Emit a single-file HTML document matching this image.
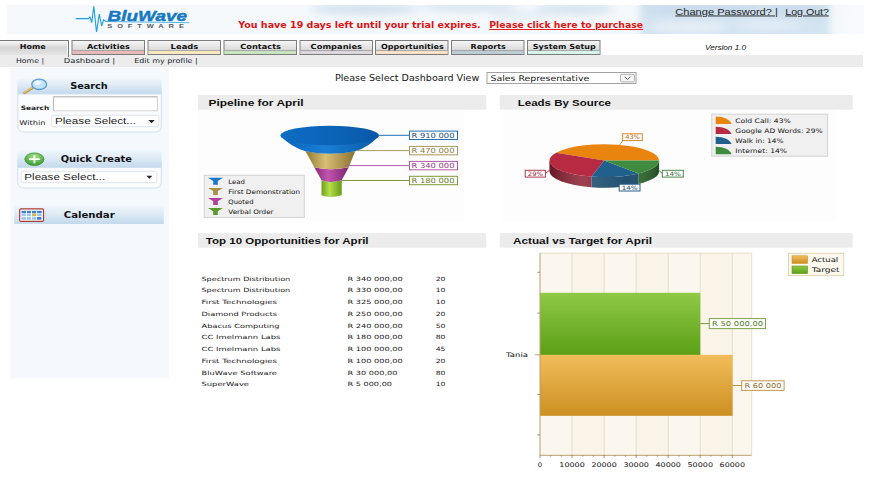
<!DOCTYPE html>
<html><head><meta charset="utf-8"><title>BluWave CRM Dashboard</title>
<style>
html,body{margin:0;padding:0;width:890px;height:500px;overflow:hidden;background:#fff}
svg{display:block}
text{white-space:pre}
</style></head><body>
<svg width="890" height="500" viewBox="0 0 890 500">
<defs>
<filter id="bl" x="-20%" y="-80%" width="140%" height="260%"><feGaussianBlur stdDeviation="4"/></filter>
<linearGradient id="hg" x1="0" x2="1"><stop offset="0" stop-color="#f4f8fc"/><stop offset="0.3" stop-color="#f3f7fb"/><stop offset="0.45" stop-color="#e3edf6"/><stop offset="0.8" stop-color="#d6e5f2"/><stop offset="0.95" stop-color="#e4eef7"/><stop offset="1" stop-color="#f6f9fc"/></linearGradient>
<clipPath id="hc"><rect x="7" y="5" width="857" height="29"/></clipPath>
<linearGradient id="tabg" x1="0" y1="0" x2="0" y2="1"><stop offset="0" stop-color="#f7f7f7"/><stop offset="0.5" stop-color="#e2e2e2"/><stop offset="1" stop-color="#cfcfcf"/></linearGradient>
<linearGradient id="homeg" x1="0" y1="0" x2="0" y2="1"><stop offset="0" stop-color="#fafafa"/><stop offset="0.45" stop-color="#d6d6d6"/><stop offset="0.75" stop-color="#dedede"/><stop offset="1" stop-color="#ececec"/></linearGradient>
<linearGradient id="phg" x1="0" y1="0" x2="0" y2="1"><stop offset="0" stop-color="#f0f6fb"/><stop offset="0.5" stop-color="#dce9f5"/><stop offset="1" stop-color="#c2d9ec"/></linearGradient>
<radialGradient id="gp" cx="0.5" cy="0.3" r="0.7"><stop offset="0" stop-color="#a5e08a"/><stop offset="1" stop-color="#3a9a32"/></radialGradient>
<linearGradient id="gbar" x1="0" y1="0" x2="0" y2="1"><stop offset="0" stop-color="#8fc945"/><stop offset="1" stop-color="#5c9f17"/></linearGradient>
<linearGradient id="obar" x1="0" y1="0" x2="0" y2="1"><stop offset="0" stop-color="#f2bd5a"/><stop offset="1" stop-color="#cc8f22"/></linearGradient>
<linearGradient id="fblue" x1="0" x2="1"><stop offset="0" stop-color="#0a63b8"/><stop offset="0.45" stop-color="#1a7fd6"/><stop offset="1" stop-color="#0a5aa8"/></linearGradient>
<linearGradient id="ftop" x1="0" x2="1"><stop offset="0" stop-color="#0d6cc4"/><stop offset="0.6" stop-color="#0b62b6"/><stop offset="1" stop-color="#0a58a6"/></linearGradient>
<linearGradient id="ftan" x1="0" x2="1"><stop offset="0" stop-color="#8f7836"/><stop offset="0.4" stop-color="#d9be74"/><stop offset="1" stop-color="#8a7232"/></linearGradient>
<linearGradient id="fpur" x1="0" x2="1"><stop offset="0" stop-color="#8a2a7c"/><stop offset="0.4" stop-color="#c055ae"/><stop offset="1" stop-color="#7c2470"/></linearGradient>
<linearGradient id="fgrn" x1="0" x2="1"><stop offset="0" stop-color="#6fa01c"/><stop offset="0.4" stop-color="#b4e04a"/><stop offset="1" stop-color="#6a981a"/></linearGradient>
<linearGradient id="pside" x1="0" x2="1"><stop offset="0" stop-color="#000" stop-opacity="0.25"/><stop offset="0.3" stop-color="#fff" stop-opacity="0.16"/><stop offset="0.7" stop-color="#fff" stop-opacity="0.05"/><stop offset="1" stop-color="#000" stop-opacity="0.25"/></linearGradient>
</defs>
<rect x="7" y="5" width="857" height="29" fill="#f6f9fc"/>
<g clip-path="url(#hc)"><g filter="url(#bl)">
<ellipse cx="365" cy="9" rx="55" ry="6" fill="#d2e1ef"/>
<ellipse cx="470" cy="7" rx="50" ry="5" fill="#d6e4f1"/>
<ellipse cx="575" cy="9" rx="40" ry="6" fill="#d4e3f0"/>
<ellipse cx="520" cy="16" rx="30" ry="4" fill="#e2ecf5"/>
<rect x="640" y="-5" width="190" height="50" fill="#d3e3f1"/>
<ellipse cx="700" cy="9" rx="60" ry="6" fill="#c9dcec"/>
<ellipse cx="800" cy="10" rx="30" ry="8" fill="#cbdded"/>
<ellipse cx="690" cy="27" rx="40" ry="5" fill="#eaf1f8"/>
<ellipse cx="770" cy="25" rx="35" ry="4" fill="#e6eff7"/>
<ellipse cx="860" cy="20" rx="16" ry="20" fill="#f8fafd"/>
</g></g>
<polyline points="75.7,18.6 88.3,18.6 90,17 91.8,22.5 93.8,6.3 96.5,32 99.3,14.2 101.7,26 103.6,19.6 106,21.6" fill="none" stroke="#1aa0e0" stroke-width="1.1"/><path d="M105.6 21.5L189.5 22.7" stroke="#2aa6e4" stroke-width="0.8"/>
<rect x="0" y="55" width="863" height="12" fill="#ececec"/>
<rect x="-2" y="40.5" width="70.5" height="16" fill="url(#homeg)" stroke="#777" stroke-width="1"/>
<rect x="-2" y="55" width="70" height="3" fill="#ececec"/>
<rect x="67" y="41" width="1" height="14" fill="#f8f8f8"/>
<rect x="72" y="40.5" width="72.5" height="14" fill="url(#tabg)" stroke="#7c7c7c" stroke-width="1"/>
<rect x="72.5" y="50.5" width="71.5" height="3.5" fill="#e9b8b8"/>
<rect x="72.5" y="50" width="71.5" height="0.8" fill="#9a9a9a"/>
<rect x="148" y="40.5" width="72.5" height="14" fill="url(#tabg)" stroke="#7c7c7c" stroke-width="1"/>
<rect x="148.5" y="50.5" width="71.5" height="3.5" fill="#fbe7be"/>
<rect x="148.5" y="50" width="71.5" height="0.8" fill="#9a9a9a"/>
<rect x="224" y="40.5" width="72.5" height="14" fill="url(#tabg)" stroke="#7c7c7c" stroke-width="1"/>
<rect x="224.5" y="50.5" width="71.5" height="3.5" fill="#c9e5c0"/>
<rect x="224.5" y="50" width="71.5" height="0.8" fill="#9a9a9a"/>
<rect x="300" y="40.5" width="72.5" height="14" fill="url(#tabg)" stroke="#7c7c7c" stroke-width="1"/>
<rect x="300.5" y="50.5" width="71.5" height="3.5" fill="#ded6de"/>
<rect x="300.5" y="50" width="71.5" height="0.8" fill="#9a9a9a"/>
<rect x="375.5" y="40.5" width="72.5" height="14" fill="url(#tabg)" stroke="#7c7c7c" stroke-width="1"/>
<rect x="376.0" y="50.5" width="71.5" height="3.5" fill="#fce1c9"/>
<rect x="376.0" y="50" width="71.5" height="0.8" fill="#9a9a9a"/>
<rect x="451.5" y="40.5" width="72.5" height="14" fill="url(#tabg)" stroke="#7c7c7c" stroke-width="1"/>
<rect x="452.0" y="50.5" width="71.5" height="3.5" fill="#bccdd6"/>
<rect x="452.0" y="50" width="71.5" height="0.8" fill="#9a9a9a"/>
<rect x="527.5" y="40.5" width="72.5" height="14" fill="url(#tabg)" stroke="#7c7c7c" stroke-width="1"/>
<rect x="528.0" y="50.5" width="71.5" height="3.5" fill="#d6f6e9"/>
<rect x="528.0" y="50" width="71.5" height="0.8" fill="#9a9a9a"/>
<rect x="10.4" y="67.5" width="158.6" height="311" fill="#f5f9fd"/>
<path d="M17.3 94V83.5Q17.3 78.5 22.3 78.5H156.8Q161.8 78.5 161.8 83.5V94Z" fill="url(#phg)"/>
<path d="M17.8 94V126Q17.8 132 23.8 132H155.3Q161.3 132 161.3 126V94Z" fill="#fafcfe" stroke="#cfe0ef" stroke-width="1"/>
<path d="M17.3 167.5V155Q17.3 150 22.3 150H156.8Q161.8 150 161.8 155V167.5Z" fill="url(#phg)"/>
<path d="M17.8 167.5V182Q17.8 188 23.8 188H155.3Q161.3 188 161.3 182V167.5Z" fill="#fafcfe" stroke="#cfe0ef" stroke-width="1"/>
<rect x="14.2" y="205.7" width="149.6" height="18.3" fill="url(#phg)"/>
<line x1="24.5" y1="92.8" x2="32.5" y2="87.8" stroke="#c9a04a" stroke-width="2.6" stroke-linecap="round"/>
<line x1="24.5" y1="92.3" x2="32.5" y2="87.3" stroke="#ecd28c" stroke-width="0.9" stroke-linecap="round"/>
<ellipse cx="39.2" cy="84.3" rx="7.4" ry="5.2" fill="#c4e4fa" stroke="#5a9ad2" stroke-width="1.3"/>
<ellipse cx="37.5" cy="82.8" rx="3.6" ry="2" fill="#ecf7ff"/>
<rect x="53.5" y="96.8" width="104" height="14" fill="#fff" stroke="#d4d4d4" stroke-width="1"/>
<path d="M53.5 110.8V96.8H157.5" fill="none" stroke="#b8b8b8" stroke-width="1"/>
<rect x="51.6" y="115.3" width="107.2" height="11.4" rx="1.5" fill="#fff" stroke="#d8e0e8" stroke-width="0.8"/>
<path d="M148.3 120L154.7 120L151.5 123.2Z" fill="#222"/>
<ellipse cx="34.4" cy="159.2" rx="9.6" ry="6.3" fill="url(#gp)" stroke="#3f9636" stroke-width="0.8"/>
<path d="M29.8 159.2H39M34.4 155.8V162.6" stroke="#fff" stroke-width="1.8" stroke-linecap="round"/>
<rect x="21.2" y="171.6" width="135.6" height="11" rx="1.5" fill="#fff" stroke="#d8e0e8" stroke-width="0.8"/>
<path d="M146.4 175.8L152.4 175.8L149.4 178.8Z" fill="#222"/>
<rect x="19.7" y="208.8" width="23.8" height="12.6" rx="1.2" fill="#fff" stroke="#a83a32" stroke-width="1.2"/>
<rect x="21.5" y="210.8" width="20.2" height="2.2" fill="#3f7fd0"/>
<rect x="21.5" y="213.4" width="20.2" height="6.4" fill="#9cc6ee"/>
<path d="M26.5 210.8V219.8M31.5 210.8V219.8M36.6 210.8V219.8M21.5 216.6H41.7" stroke="#fff" stroke-width="0.9"/>
<rect x="32" y="213.6" width="4.2" height="2.6" fill="#e0b040"/><rect x="37" y="217" width="4.2" height="2.6" fill="#3f7fd0"/>
<rect x="487" y="72.5" width="149" height="11" fill="#fff" stroke="#a2a2a2" stroke-width="1"/>
<rect x="620.5" y="74.3" width="14" height="7.6" rx="1.5" fill="#f6f6f6" stroke="#b0b0b0" stroke-width="1"/>
<path d="M624.7 76.8L627.5 79.5L630.3 76.8" fill="none" stroke="#444" stroke-width="0.9"/>
<rect x="197.9" y="95.1" width="288.3" height="14.6" fill="#ececec"/>
<rect x="499.8" y="95.1" width="352.9" height="14.6" fill="#ececec"/>
<rect x="197.9" y="233.1" width="288.3" height="14.6" fill="#ececec"/>
<rect x="499.8" y="233.1" width="352.9" height="14.6" fill="#ececec"/>
<rect x="198" y="110" width="266" height="112" fill="#fdfdfd"/><rect x="503" y="110" width="333" height="111" fill="#fdfdfd"/>
<path d="M321.5 180.3Q330 183.5 341.7 180.3L341.7 195.2Q330 198.6 321.5 195.2Z" fill="url(#fgrn)"/>
<path d="M314.3 167.2Q330 171.2 348.7 167.2L341.7 180.3Q330 183.5 321.5 180.3Z" fill="url(#fpur)"/>
<path d="M305.5 151.3Q330 156.10000000000002 355.2 151.3L348.7 167.2Q330 171.2 314.3 167.2Z" fill="url(#ftan)"/>
<path d="M280.5 135.5Q290 146.5 305.5 151.3Q330 156.3 355.2 151.3Q370 146.5 379 135.5Z" fill="url(#fblue)"/>
<ellipse cx="329.7" cy="135.5" rx="49.2" ry="9.8" fill="url(#ftop)"/>
<path d="M378 135.3H409.5" stroke="#1f6fb5" stroke-width="1" fill="none"/>
<rect x="409.5" y="131.10000000000002" width="48" height="8.4" fill="#fff" stroke="#1f6fb5" stroke-width="1"/>
<path d="M356 150.6H409.5" stroke="#a89a5a" stroke-width="1" fill="none"/>
<rect x="409.5" y="146.4" width="48" height="8.4" fill="#fff" stroke="#a89a5a" stroke-width="1"/>
<path d="M345 165.6H409.5" stroke="#b45aa8" stroke-width="1" fill="none"/>
<rect x="409.5" y="161.4" width="48" height="8.4" fill="#fff" stroke="#b45aa8" stroke-width="1"/>
<path d="M341 180.5H409.5" stroke="#7d9a3a" stroke-width="1" fill="none"/>
<rect x="409.5" y="176.3" width="48" height="8.4" fill="#fff" stroke="#7d9a3a" stroke-width="1"/>
<rect x="204.3" y="175.3" width="100" height="42.2" fill="#f0f0f0" stroke="#d2d2d2" stroke-width="1"/>
<path d="M208 177.8H223L217.8 181.0V184.8H213.2V181.0Z" fill="#1a78cc"/>
<path d="M208 187.9H223L217.8 191.1V194.9H213.2V191.1Z" fill="#a8904a"/>
<path d="M208 198.0H223L217.8 201.2V205.0H213.2V201.2Z" fill="#b040a0"/>
<path d="M208 208.10000000000002H223L217.8 211.3V215.10000000000002H213.2V211.3Z" fill="#5a9a2a"/>
<path d="M549.5 160.6A54.8 16.4 0 0 0 591.51 176.55L591.51 187.15A54.8 16.4 0 0 1 549.5 171.2Z" fill="#8a1c30"/>
<path d="M591.51 176.55A54.8 16.4 0 0 0 638.41 173.43L638.41 184.03A54.8 16.4 0 0 1 591.51 187.15Z" fill="#17486a"/>
<path d="M638.41 173.43A54.8 16.4 0 0 0 659.1 160.6L659.1 171.2A54.8 16.4 0 0 1 638.41 184.03Z" fill="#2d682d"/>
<path d="M549.5 160.6A54.8 16.4 0 0 0 659.1 160.6L659.1 171.2A54.8 16.4 0 0 1 549.5 171.2Z" fill="url(#pside)"/>
<path d="M604.3 160.6L659.1 160.6A54.8 16.4 0 0 0 556.14 152.77Z" fill="#e9850f"/>
<path d="M604.3 160.6L556.14 152.77A54.8 16.4 0 0 0 591.51 176.55Z" fill="#b72a41"/>
<path d="M604.3 160.6L591.51 176.55A54.8 16.4 0 0 0 638.41 173.43Z" fill="#20608c"/>
<path d="M604.3 160.6L638.41 173.43A54.8 16.4 0 0 0 659.1 160.6Z" fill="#3f8b3f"/>
<path d="M622.8 140.6L619.3 145.2" stroke="#d98a2a" stroke-width="1"/>
<rect x="622.6" y="133.8" width="19.7" height="6.8" fill="#fff" stroke="#d98a2a" stroke-width="1"/>
<path d="M545.4 173.6L550.4 169.5" stroke="#b03a50" stroke-width="1"/>
<rect x="525.2" y="170.3" width="20.2" height="6.8" fill="#fff" stroke="#b03a50" stroke-width="1"/>
<path d="M628 184.2L624 187" stroke="#2a5f86" stroke-width="1"/>
<rect x="619.2" y="184.2" width="20.8" height="6.8" fill="#fff" stroke="#2a5f86" stroke-width="1"/>
<path d="M662.3 173.6L658 169.5" stroke="#4a8a4a" stroke-width="1"/>
<rect x="662.3" y="170.3" width="21" height="6.8" fill="#fff" stroke="#4a8a4a" stroke-width="1"/>
<rect x="711.8" y="114.2" width="115.8" height="42" fill="#f0f0f0" stroke="#d2d2d2" stroke-width="1"/>
<path d="M715.7 116.6C724 116.6 730 119.6 731.5 124.0H715.7Z" fill="#e9850f"/>
<path d="M715.7 126.64999999999999C724 126.64999999999999 730 129.64999999999998 731.5 134.04999999999998H715.7Z" fill="#b72a41"/>
<path d="M715.7 136.7C724 136.7 730 139.7 731.5 144.1H715.7Z" fill="#20608c"/>
<path d="M715.7 146.75C724 146.75 730 149.75 731.5 154.15H715.7Z" fill="#3f8b3f"/>
<rect x="540" y="253" width="211.7" height="202" fill="#fbf5e9"/>
<rect x="540.0" y="253" width="32.05" height="202" fill="#fcf7ee"/>
<rect x="604.1" y="253" width="32.05" height="202" fill="#fcf7ee"/>
<rect x="668.2" y="253" width="32.05" height="202" fill="#fcf7ee"/>
<rect x="732.3" y="253" width="19.4" height="202" fill="#fcf7ee"/>
<path d="M572.0 253V455" stroke="#e6dcc8" stroke-width="1"/>
<path d="M604.1 253V455" stroke="#e6dcc8" stroke-width="1"/>
<path d="M636.1 253V455" stroke="#e6dcc8" stroke-width="1"/>
<path d="M668.2 253V455" stroke="#e6dcc8" stroke-width="1"/>
<path d="M700.2 253V455" stroke="#e6dcc8" stroke-width="1"/>
<path d="M732.3 253V455" stroke="#e6dcc8" stroke-width="1"/>
<path d="M540 253.2H751.7V455" fill="none" stroke="#e9dfcb" stroke-width="1"/>
<rect x="540" y="292.8" width="160.3" height="62.2" fill="url(#gbar)"/>
<rect x="540" y="354.8" width="192.6" height="61" fill="url(#obar)"/>
<path d="M540 253V455.3H751.7" fill="none" stroke="#b8a06a" stroke-width="1"/>
<path d="M537.5 272.3H540" stroke="#777" stroke-width="0.8"/>
<path d="M537.5 313.1H540" stroke="#777" stroke-width="0.8"/>
<path d="M537.5 394.5H540" stroke="#777" stroke-width="0.8"/>
<path d="M537.5 434.9H540" stroke="#777" stroke-width="0.8"/>
<path d="M535 354.8H540" stroke="#b8a06a" stroke-width="1"/>
<path d="M540.0 455V458" stroke="#8a7a50" stroke-width="0.8"/>
<path d="M550.7 455V457" stroke="#9a8a60" stroke-width="0.6"/>
<path d="M561.4 455V457" stroke="#9a8a60" stroke-width="0.6"/>
<path d="M572.0 455V458" stroke="#8a7a50" stroke-width="0.8"/>
<path d="M582.7 455V457" stroke="#9a8a60" stroke-width="0.6"/>
<path d="M593.4 455V457" stroke="#9a8a60" stroke-width="0.6"/>
<path d="M604.1 455V458" stroke="#8a7a50" stroke-width="0.8"/>
<path d="M614.8 455V457" stroke="#9a8a60" stroke-width="0.6"/>
<path d="M625.5 455V457" stroke="#9a8a60" stroke-width="0.6"/>
<path d="M636.1 455V458" stroke="#8a7a50" stroke-width="0.8"/>
<path d="M646.8 455V457" stroke="#9a8a60" stroke-width="0.6"/>
<path d="M657.5 455V457" stroke="#9a8a60" stroke-width="0.6"/>
<path d="M668.2 455V458" stroke="#8a7a50" stroke-width="0.8"/>
<path d="M678.9 455V457" stroke="#9a8a60" stroke-width="0.6"/>
<path d="M689.6 455V457" stroke="#9a8a60" stroke-width="0.6"/>
<path d="M700.2 455V458" stroke="#8a7a50" stroke-width="0.8"/>
<path d="M710.9 455V457" stroke="#9a8a60" stroke-width="0.6"/>
<path d="M721.6 455V457" stroke="#9a8a60" stroke-width="0.6"/>
<path d="M732.3 455V458" stroke="#8a7a50" stroke-width="0.8"/>
<path d="M700.3 323.6H709.3" stroke="#6f9a3a" stroke-width="1"/>
<rect x="709.3" y="318.6" width="56.2" height="10" fill="#fff" stroke="#7da24a" stroke-width="1"/>
<path d="M732.6 385.5H741.7" stroke="#b8923a" stroke-width="1"/>
<rect x="741.7" y="380.8" width="42.4" height="9.6" fill="#fff" stroke="#c09a4a" stroke-width="1"/>
<rect x="788.5" y="253.3" width="55.2" height="22.3" fill="#fdf9ef" stroke="#e0d4b8" stroke-width="1"/>
<rect x="792" y="255.8" width="15.6" height="7.6" fill="url(#obar)" stroke="#c8922a" stroke-width="0.6"/>
<rect x="792" y="266" width="15.6" height="7.6" fill="url(#gbar)" stroke="#5f9a1a" stroke-width="0.6"/>
<!-- text -->
<text x="107.5" y="21.3" font-family="Liberation Sans, sans-serif" font-size="14.5" font-weight="bold" font-style="italic" textLength="79.5" lengthAdjust="spacingAndGlyphs" fill="#1478c4" stroke="#1478c4" stroke-width="0.45">BluWave</text>
<text x="107.3" y="28" font-family="Liberation Sans, sans-serif" font-size="4.8" font-weight="bold" letter-spacing="3.2" textLength="81.5" lengthAdjust="spacingAndGlyphs" fill="#5a5a5a">SOFTWARE</text>
<text x="238.2" y="28" font-family="DejaVu Sans, Liberation Sans, sans-serif" font-size="9.3" font-weight="bold" textLength="242.5" lengthAdjust="spacingAndGlyphs" fill="#e01212">You have 19 days left until your trial expires.</text>
<text x="489.3" y="28" font-family="DejaVu Sans, Liberation Sans, sans-serif" font-size="9.3" font-weight="bold" text-decoration="underline" textLength="153.8" lengthAdjust="spacingAndGlyphs" fill="#e01212">Please click here to purchase</text>
<text x="675.3" y="14.5" font-family="Liberation Sans, sans-serif" font-size="9.2" text-decoration="underline" textLength="102.6" lengthAdjust="spacingAndGlyphs" fill="#222">Change Password? |</text>
<text x="785.3" y="14.5" font-family="Liberation Sans, sans-serif" font-size="9.2" text-decoration="underline" textLength="43.6" lengthAdjust="spacingAndGlyphs" fill="#222">Log Out?</text>
<text x="87" y="48.5" font-family="DejaVu Sans, Liberation Sans, sans-serif" font-size="7" font-weight="bold" textLength="42.8" lengthAdjust="spacingAndGlyphs" fill="#111">Activities</text>
<text x="170.6" y="48.5" font-family="DejaVu Sans, Liberation Sans, sans-serif" font-size="7" font-weight="bold" textLength="27.7" lengthAdjust="spacingAndGlyphs" fill="#111">Leads</text>
<text x="240.2" y="48.5" font-family="DejaVu Sans, Liberation Sans, sans-serif" font-size="7" font-weight="bold" textLength="40.8" lengthAdjust="spacingAndGlyphs" fill="#111">Contacts</text>
<text x="310.6" y="48.5" font-family="DejaVu Sans, Liberation Sans, sans-serif" font-size="7" font-weight="bold" textLength="51.4" lengthAdjust="spacingAndGlyphs" fill="#111">Companies</text>
<text x="381" y="48.5" font-family="DejaVu Sans, Liberation Sans, sans-serif" font-size="7" font-weight="bold" textLength="62.8" lengthAdjust="spacingAndGlyphs" fill="#111">Opportunities</text>
<text x="470.5" y="48.5" font-family="DejaVu Sans, Liberation Sans, sans-serif" font-size="7" font-weight="bold" textLength="35.3" lengthAdjust="spacingAndGlyphs" fill="#111">Reports</text>
<text x="532.8" y="48.5" font-family="DejaVu Sans, Liberation Sans, sans-serif" font-size="7" font-weight="bold" textLength="63.0" lengthAdjust="spacingAndGlyphs" fill="#111">System Setup</text>
<text x="19.8" y="48.5" font-family="DejaVu Sans, Liberation Sans, sans-serif" font-size="7" font-weight="bold" textLength="25.9" lengthAdjust="spacingAndGlyphs" fill="#111">Home</text>
<text x="705" y="49.6" font-family="Liberation Sans, sans-serif" font-size="6.3" font-style="italic" textLength="41" lengthAdjust="spacingAndGlyphs" fill="#111">Version 1.0</text>
<text x="16" y="62.6" font-family="DejaVu Sans, Liberation Sans, sans-serif" font-size="6.6" textLength="28" lengthAdjust="spacingAndGlyphs" fill="#141c2e">Home |</text>
<text x="63.8" y="62.6" font-family="DejaVu Sans, Liberation Sans, sans-serif" font-size="6.6" textLength="51.2" lengthAdjust="spacingAndGlyphs" fill="#141c2e">Dashboard |</text>
<text x="134.2" y="62.6" font-family="DejaVu Sans, Liberation Sans, sans-serif" font-size="6.6" textLength="63.6" lengthAdjust="spacingAndGlyphs" fill="#141c2e">Edit my profile |</text>
<text x="70.2" y="89.4" font-family="DejaVu Sans, Liberation Sans, sans-serif" font-size="8.3" font-weight="bold" textLength="37.6" lengthAdjust="spacingAndGlyphs" fill="#111">Search</text>
<text x="20.8" y="110" font-family="DejaVu Sans, Liberation Sans, sans-serif" font-size="6" font-weight="bold" textLength="28.4" lengthAdjust="spacingAndGlyphs" fill="#222">Search</text>
<text x="19.2" y="124.7" font-family="DejaVu Sans, Liberation Sans, sans-serif" font-size="6.4" textLength="26.3" lengthAdjust="spacingAndGlyphs" fill="#222">Within</text>
<text x="55" y="124.3" font-family="Liberation Sans, sans-serif" font-size="9.3" textLength="81" lengthAdjust="spacingAndGlyphs" fill="#222">Please Select...</text>
<text x="60.7" y="162.3" font-family="DejaVu Sans, Liberation Sans, sans-serif" font-size="8.3" font-weight="bold" textLength="71.2" lengthAdjust="spacingAndGlyphs" fill="#111">Quick Create</text>
<text x="24.3" y="179.8" font-family="Liberation Sans, sans-serif" font-size="9.3" textLength="80.9" lengthAdjust="spacingAndGlyphs" fill="#222">Please Select...</text>
<text x="63.7" y="218" font-family="DejaVu Sans, Liberation Sans, sans-serif" font-size="8.3" font-weight="bold" textLength="51.0" lengthAdjust="spacingAndGlyphs" fill="#111">Calendar</text>
<text x="334.9" y="81.3" font-family="DejaVu Sans, Liberation Sans, sans-serif" font-size="9" textLength="144.4" lengthAdjust="spacingAndGlyphs" fill="#151515">Please Select Dashboard View</text>
<text x="490.5" y="80.8" font-family="DejaVu Sans, Liberation Sans, sans-serif" font-size="7.8" textLength="98.7" lengthAdjust="spacingAndGlyphs" fill="#151515">Sales Representative</text>
<text x="208.5" y="105.5" font-family="Liberation Sans, sans-serif" font-size="8.6" font-weight="bold" textLength="95.1" lengthAdjust="spacingAndGlyphs" fill="#111">Pipeline for April</text>
<text x="517.8" y="105.5" font-family="Liberation Sans, sans-serif" font-size="8.6" font-weight="bold" textLength="93.2" lengthAdjust="spacingAndGlyphs" fill="#111">Leads By Source</text>
<text x="205.75" y="243.6" font-family="Liberation Sans, sans-serif" font-size="8.6" font-weight="bold" textLength="162.8" lengthAdjust="spacingAndGlyphs" fill="#111">Top 10 Opportunities for April</text>
<text x="513" y="243.6" font-family="Liberation Sans, sans-serif" font-size="8.6" font-weight="bold" textLength="139" lengthAdjust="spacingAndGlyphs" fill="#111">Actual vs Target for April</text>
<text x="411.5" y="138.10000000000002" font-family="DejaVu Sans, Liberation Sans, sans-serif" font-size="7" textLength="43.0" lengthAdjust="spacingAndGlyphs" fill="#1b4f86">R 910 000</text>
<text x="411.5" y="153.4" font-family="DejaVu Sans, Liberation Sans, sans-serif" font-size="7" textLength="43.0" lengthAdjust="spacingAndGlyphs" fill="#8a7c40">R 470 000</text>
<text x="411.5" y="168.4" font-family="DejaVu Sans, Liberation Sans, sans-serif" font-size="7" textLength="43.0" lengthAdjust="spacingAndGlyphs" fill="#8e3a84">R 340 000</text>
<text x="411.5" y="183.3" font-family="DejaVu Sans, Liberation Sans, sans-serif" font-size="7" textLength="43.0" lengthAdjust="spacingAndGlyphs" fill="#5f7a28">R 180 000</text>
<text x="228.3" y="183.8" font-family="DejaVu Sans, Liberation Sans, sans-serif" font-size="6.2" textLength="16.7" lengthAdjust="spacingAndGlyphs" fill="#111">Lead</text>
<text x="228.3" y="193.9" font-family="DejaVu Sans, Liberation Sans, sans-serif" font-size="6.2" textLength="71.7" lengthAdjust="spacingAndGlyphs" fill="#111">First Demonstration</text>
<text x="228.3" y="204.0" font-family="DejaVu Sans, Liberation Sans, sans-serif" font-size="6.2" textLength="25.2" lengthAdjust="spacingAndGlyphs" fill="#111">Quoted</text>
<text x="228.3" y="214.10000000000002" font-family="DejaVu Sans, Liberation Sans, sans-serif" font-size="6.2" textLength="45.2" lengthAdjust="spacingAndGlyphs" fill="#111">Verbal Order</text>
<text x="625.2" y="139.4" font-family="DejaVu Sans, Liberation Sans, sans-serif" font-size="6" textLength="14.7" lengthAdjust="spacingAndGlyphs" fill="#c06a10">43%</text>
<text x="527.8000000000001" y="175.9" font-family="DejaVu Sans, Liberation Sans, sans-serif" font-size="6" textLength="15.2" lengthAdjust="spacingAndGlyphs" fill="#9a2a40">29%</text>
<text x="621.8000000000001" y="189.79999999999998" font-family="DejaVu Sans, Liberation Sans, sans-serif" font-size="6" textLength="15.8" lengthAdjust="spacingAndGlyphs" fill="#1f4a6c">14%</text>
<text x="664.9" y="175.9" font-family="DejaVu Sans, Liberation Sans, sans-serif" font-size="6" textLength="16.0" lengthAdjust="spacingAndGlyphs" fill="#3a6f3a">14%</text>
<text x="735.3" y="122.69999999999999" font-family="DejaVu Sans, Liberation Sans, sans-serif" font-size="6.2" textLength="55.4" lengthAdjust="spacingAndGlyphs" fill="#111">Cold Call: 43%</text>
<text x="735.3" y="132.75" font-family="DejaVu Sans, Liberation Sans, sans-serif" font-size="6.2" textLength="87.3" lengthAdjust="spacingAndGlyphs" fill="#111">Google AD Words: 29%</text>
<text x="735.3" y="142.79999999999998" font-family="DejaVu Sans, Liberation Sans, sans-serif" font-size="6.2" textLength="48.2" lengthAdjust="spacingAndGlyphs" fill="#111">Walk in: 14%</text>
<text x="735.3" y="152.85" font-family="DejaVu Sans, Liberation Sans, sans-serif" font-size="6.2" textLength="51.6" lengthAdjust="spacingAndGlyphs" fill="#111">Internet: 14%</text>
<text x="201.5" y="280.6" font-family="DejaVu Sans, Liberation Sans, sans-serif" font-size="5.7" textLength="88.7" lengthAdjust="spacingAndGlyphs" fill="#222">Spectrum Distribution</text>
<text x="347.5" y="280.6" font-family="DejaVu Sans, Liberation Sans, sans-serif" font-size="5.7" textLength="55.3" lengthAdjust="spacingAndGlyphs" fill="#222">R 340 000,00</text>
<text x="435.7" y="280.6" font-family="DejaVu Sans, Liberation Sans, sans-serif" font-size="5.7" textLength="9.8" lengthAdjust="spacingAndGlyphs" fill="#222">20</text>
<text x="201.5" y="292.4" font-family="DejaVu Sans, Liberation Sans, sans-serif" font-size="5.7" textLength="88.7" lengthAdjust="spacingAndGlyphs" fill="#222">Spectrum Distribution</text>
<text x="347.5" y="292.4" font-family="DejaVu Sans, Liberation Sans, sans-serif" font-size="5.7" textLength="55.3" lengthAdjust="spacingAndGlyphs" fill="#222">R 330 000,00</text>
<text x="435.7" y="292.4" font-family="DejaVu Sans, Liberation Sans, sans-serif" font-size="5.7" textLength="9.8" lengthAdjust="spacingAndGlyphs" fill="#222">10</text>
<text x="201.5" y="304.1" font-family="DejaVu Sans, Liberation Sans, sans-serif" font-size="5.7" textLength="75.5" lengthAdjust="spacingAndGlyphs" fill="#222">First Technologies</text>
<text x="347.5" y="304.1" font-family="DejaVu Sans, Liberation Sans, sans-serif" font-size="5.7" textLength="55.3" lengthAdjust="spacingAndGlyphs" fill="#222">R 325 000,00</text>
<text x="435.7" y="304.1" font-family="DejaVu Sans, Liberation Sans, sans-serif" font-size="5.7" textLength="9.8" lengthAdjust="spacingAndGlyphs" fill="#222">10</text>
<text x="201.5" y="315.9" font-family="DejaVu Sans, Liberation Sans, sans-serif" font-size="5.7" textLength="75.5" lengthAdjust="spacingAndGlyphs" fill="#222">Diamond Products</text>
<text x="347.5" y="315.9" font-family="DejaVu Sans, Liberation Sans, sans-serif" font-size="5.7" textLength="55.3" lengthAdjust="spacingAndGlyphs" fill="#222">R 250 000,00</text>
<text x="435.7" y="315.9" font-family="DejaVu Sans, Liberation Sans, sans-serif" font-size="5.7" textLength="9.8" lengthAdjust="spacingAndGlyphs" fill="#222">20</text>
<text x="201.5" y="327.6" font-family="DejaVu Sans, Liberation Sans, sans-serif" font-size="5.7" textLength="78.0" lengthAdjust="spacingAndGlyphs" fill="#222">Abacus Computing</text>
<text x="347.5" y="327.6" font-family="DejaVu Sans, Liberation Sans, sans-serif" font-size="5.7" textLength="55.3" lengthAdjust="spacingAndGlyphs" fill="#222">R 240 000,00</text>
<text x="435.7" y="327.6" font-family="DejaVu Sans, Liberation Sans, sans-serif" font-size="5.7" textLength="9.8" lengthAdjust="spacingAndGlyphs" fill="#222">50</text>
<text x="201.5" y="339.4" font-family="DejaVu Sans, Liberation Sans, sans-serif" font-size="5.7" textLength="79.0" lengthAdjust="spacingAndGlyphs" fill="#222">CC Imelmann Labs</text>
<text x="347.5" y="339.4" font-family="DejaVu Sans, Liberation Sans, sans-serif" font-size="5.7" textLength="55.3" lengthAdjust="spacingAndGlyphs" fill="#222">R 180 000,00</text>
<text x="435.7" y="339.4" font-family="DejaVu Sans, Liberation Sans, sans-serif" font-size="5.7" textLength="9.8" lengthAdjust="spacingAndGlyphs" fill="#222">80</text>
<text x="201.5" y="351.2" font-family="DejaVu Sans, Liberation Sans, sans-serif" font-size="5.7" textLength="79.0" lengthAdjust="spacingAndGlyphs" fill="#222">CC Imelmann Labs</text>
<text x="347.5" y="351.2" font-family="DejaVu Sans, Liberation Sans, sans-serif" font-size="5.7" textLength="55.3" lengthAdjust="spacingAndGlyphs" fill="#222">R 100 000,00</text>
<text x="435.7" y="351.2" font-family="DejaVu Sans, Liberation Sans, sans-serif" font-size="5.7" textLength="9.8" lengthAdjust="spacingAndGlyphs" fill="#222">45</text>
<text x="201.5" y="362.9" font-family="DejaVu Sans, Liberation Sans, sans-serif" font-size="5.7" textLength="75.5" lengthAdjust="spacingAndGlyphs" fill="#222">First Technologies</text>
<text x="347.5" y="362.9" font-family="DejaVu Sans, Liberation Sans, sans-serif" font-size="5.7" textLength="55.3" lengthAdjust="spacingAndGlyphs" fill="#222">R 100 000,00</text>
<text x="435.7" y="362.9" font-family="DejaVu Sans, Liberation Sans, sans-serif" font-size="5.7" textLength="9.8" lengthAdjust="spacingAndGlyphs" fill="#222">20</text>
<text x="201.5" y="374.7" font-family="DejaVu Sans, Liberation Sans, sans-serif" font-size="5.7" textLength="75.5" lengthAdjust="spacingAndGlyphs" fill="#222">BluWave Software</text>
<text x="347.5" y="374.7" font-family="DejaVu Sans, Liberation Sans, sans-serif" font-size="5.7" textLength="50.0" lengthAdjust="spacingAndGlyphs" fill="#222">R 30 000,00</text>
<text x="435.7" y="374.7" font-family="DejaVu Sans, Liberation Sans, sans-serif" font-size="5.7" textLength="9.8" lengthAdjust="spacingAndGlyphs" fill="#222">80</text>
<text x="201.5" y="386.4" font-family="DejaVu Sans, Liberation Sans, sans-serif" font-size="5.7" textLength="47.5" lengthAdjust="spacingAndGlyphs" fill="#222">SuperWave</text>
<text x="347.5" y="386.4" font-family="DejaVu Sans, Liberation Sans, sans-serif" font-size="5.7" textLength="44.5" lengthAdjust="spacingAndGlyphs" fill="#222">R 5 000,00</text>
<text x="435.7" y="386.4" font-family="DejaVu Sans, Liberation Sans, sans-serif" font-size="5.7" textLength="9.8" lengthAdjust="spacingAndGlyphs" fill="#222">10</text>
<text x="537.8" y="466.7" font-family="DejaVu Sans, Liberation Sans, sans-serif" font-size="6.4" textLength="4.4" lengthAdjust="spacingAndGlyphs" fill="#111">0</text>
<text x="559.3" y="466.7" font-family="DejaVu Sans, Liberation Sans, sans-serif" font-size="6.4" textLength="25.5" lengthAdjust="spacingAndGlyphs" fill="#111">10000</text>
<text x="591.4" y="466.7" font-family="DejaVu Sans, Liberation Sans, sans-serif" font-size="6.4" textLength="25.4" lengthAdjust="spacingAndGlyphs" fill="#111">20000</text>
<text x="623.4" y="466.7" font-family="DejaVu Sans, Liberation Sans, sans-serif" font-size="6.4" textLength="25.5" lengthAdjust="spacingAndGlyphs" fill="#111">30000</text>
<text x="655.5" y="466.7" font-family="DejaVu Sans, Liberation Sans, sans-serif" font-size="6.4" textLength="25.4" lengthAdjust="spacingAndGlyphs" fill="#111">40000</text>
<text x="687.5" y="466.7" font-family="DejaVu Sans, Liberation Sans, sans-serif" font-size="6.4" textLength="25.5" lengthAdjust="spacingAndGlyphs" fill="#111">50000</text>
<text x="719.6" y="466.7" font-family="DejaVu Sans, Liberation Sans, sans-serif" font-size="6.4" textLength="25.4" lengthAdjust="spacingAndGlyphs" fill="#111">60000</text>
<text x="506" y="356.8" font-family="DejaVu Sans, Liberation Sans, sans-serif" font-size="6.3" textLength="22" lengthAdjust="spacingAndGlyphs" fill="#111">Tania</text>
<text x="712" y="326.3" font-family="DejaVu Sans, Liberation Sans, sans-serif" font-size="6.6" textLength="51.2" lengthAdjust="spacingAndGlyphs" fill="#4f7a22">R 50 000,00</text>
<text x="744.5" y="388.1" font-family="DejaVu Sans, Liberation Sans, sans-serif" font-size="6.6" textLength="37.0" lengthAdjust="spacingAndGlyphs" fill="#8a6a1a">R 60 000</text>
<text x="811.7" y="262.1" font-family="DejaVu Sans, Liberation Sans, sans-serif" font-size="6.6" textLength="26.5" lengthAdjust="spacingAndGlyphs" fill="#111">Actual</text>
<text x="811.7" y="272.3" font-family="DejaVu Sans, Liberation Sans, sans-serif" font-size="6.6" textLength="27.9" lengthAdjust="spacingAndGlyphs" fill="#111">Target</text>
</svg>
</body></html>
